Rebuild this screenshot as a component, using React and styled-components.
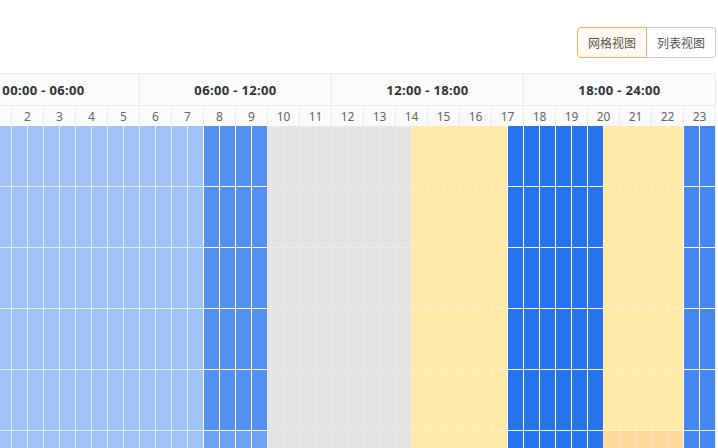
import React from "react";
import styled, { createGlobalStyle } from "styled-components";

const Global = createGlobalStyle`
  html, body { margin: 0; padding: 0; background: #fff; overflow: hidden; }
  body { font-family: "Noto Sans", "Noto Sans CJK SC", sans-serif; }
`;

const Page = styled.div`
  width: 718px;
  height: 448px;
  overflow: hidden;
  display: flex;
  flex-direction: column;
`;

const Toolbar = styled.div`
  display: flex;
  justify-content: flex-end;
  padding: 27px 2px 15px 0;
`;

const ButtonGroup = styled.div`
  display: inline-flex;
`;

const ViewButton = styled.button`
  height: 31px;
  padding: 0 10px;
  box-sizing: border-box;
  font-family: "Noto Sans CJK SC", "Noto Sans", sans-serif;
  font-size: 12px;
  color: #555;
  cursor: pointer;
  background: ${(p) => (p.$active ? "#fffaf2" : "#fff")};
  border: 1px solid ${(p) => (p.$active ? "#f2ae62" : "#c9c9c9")};
  border-left-width: ${(p) => (p.$first ? "1px" : "0")};
  border-radius: ${(p) => (p.$first ? "4px 0 0 4px" : "0 4px 4px 0")};
  width: ${(p) => (p.$first ? "70px" : "69px")};
`;

const Viewport = styled.div`
  display: flex;
  justify-content: flex-end;
  overflow: hidden;
  padding-right: 2px;
`;

const Table = styled.div`
  flex-shrink: 0;
  width: 769px;
  box-sizing: border-box;
  border-top: 1px solid #ebebeb;
  border-right: 1px solid #ebebeb;
`;

const GroupRow = styled.div`
  display: flex;
  height: 32px;
  background: #fafafa;
  border-bottom: 1px solid #ebebeb;
  box-sizing: border-box;
`;

const GroupCell = styled.div`
  width: 192px;
  flex-shrink: 0;
  box-sizing: border-box;
  border-left: 1px solid #ebebeb;
  display: flex;
  align-items: center;
  justify-content: center;
  font-size: 13px;
  font-weight: 700;
  letter-spacing: 0.35px;
  color: #333;
`;

const HourRow = styled.div`
  display: flex;
  height: 20px;
  background: #fafafa;
`;

const HourCell = styled.div`
  width: 32px;
  flex-shrink: 0;
  box-sizing: border-box;
  border-left: 1px solid #ebebeb;
  display: flex;
  align-items: center;
  justify-content: center;
  font-size: 12px;
  color: #666;
`;

const BodyRow = styled.div`
  display: flex;
  height: 61px;
`;

const palette = {
  light: { bg: "#9fc2f7", line: "#e3ecfc" },
  mid: { bg: "#5590ef", line: "#ffffff" },
  midSoft: { bg: "#6ea2f1", line: "#ffffff" },
  gray: { bg: "#e4e4e4", line: "#eaeaea" },
  yellow: { bg: "#ffeaa7", line: "#fff0c6" },
  orange: { bg: "#fdd99d", line: "#fee3b8" },
  deep: { bg: "#2773ee", line: "#ffffff" },
  blue: { bg: "#4586f0", line: "#ffffff" },
};

const Cell = styled.div`
  width: 16px;
  height: 61px;
  flex-shrink: 0;
  box-sizing: border-box;
  background: ${(p) => palette[p.$kind].bg};
  border-left: 1px solid ${(p) => palette[p.$kind].line};
  border-bottom: 1px solid ${(p) => palette[p.$kind].line};
`;

const groups = ["00:00 - 06:00", "06:00 - 12:00", "12:00 - 18:00", "18:00 - 24:00"];
const hours = Array.from({ length: 24 }, (_, i) => i);

function baseKind(i) {
  if (i < 16) return "light";
  if (i < 20) return "mid";
  if (i < 29) return "gray";
  if (i < 35) return "yellow";
  if (i < 41) return "deep";
  if (i < 46) return "yellow";
  return "blue";
}

function rowKinds(r) {
  return Array.from({ length: 48 }, (_, i) => {
    const k = baseKind(i);
    if (r === 5) {
      if (k === "mid") return "midSoft";
      if (i >= 41 && i < 46) return "orange";
    }
    return k;
  });
}

const rows = Array.from({ length: 6 }, (_, r) => rowKinds(r));

export default function App() {
  return (
    <Page>
      <Global />
      <Toolbar>
        <ButtonGroup>
          <ViewButton $active $first>网格视图</ViewButton>
          <ViewButton>列表视图</ViewButton>
        </ButtonGroup>
      </Toolbar>
      <Viewport>
        <Table>
          <GroupRow>
            {groups.map((g) => (
              <GroupCell key={g}>{g}</GroupCell>
            ))}
          </GroupRow>
          <HourRow>
            {hours.map((h) => (
              <HourCell key={h}>{h}</HourCell>
            ))}
          </HourRow>
          {rows.map((kinds, r) => (
            <BodyRow key={r}>
              {kinds.map((k, i) => (
                <Cell key={i} $kind={k} />
              ))}
            </BodyRow>
          ))}
        </Table>
      </Viewport>
    </Page>
  );
}
